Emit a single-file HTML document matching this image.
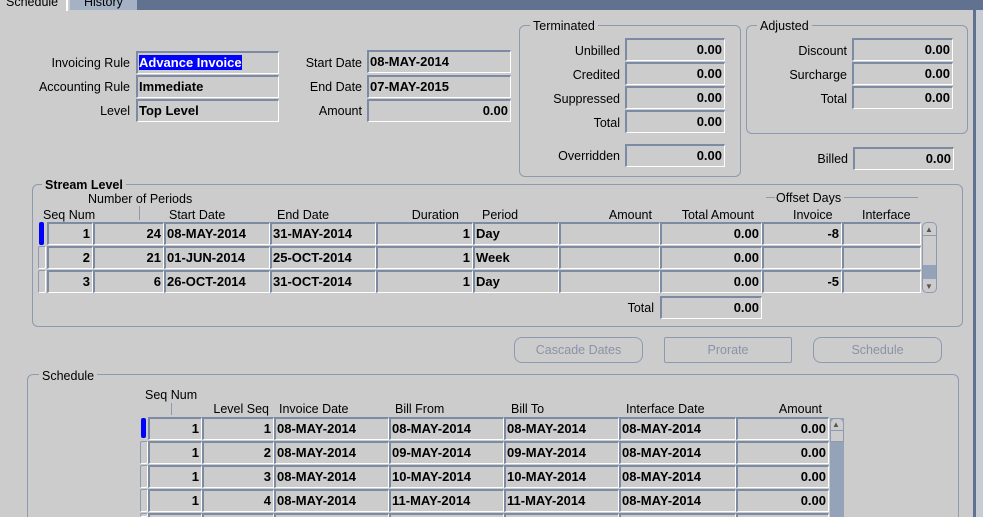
<!DOCTYPE html>
<html style="overflow:hidden;width:983px;height:517px"><head><style>
html,body{overflow:hidden}
body{margin:0;width:983px;height:517px;background:#cccccc;position:relative;overflow:hidden;font-family:"Liberation Sans",sans-serif}
div{position:absolute;box-sizing:border-box}
.f{height:23px;border:1px solid #fff;border-top:2px solid #7d8aa3;border-left:2px solid #7d8aa3;font:bold 13px "Liberation Sans",sans-serif;line-height:19px;padding:0 2px 0 1px;white-space:nowrap;overflow:hidden;color:#000}
.r{text-align:right}
.l{font-size:12.5px;line-height:14px;white-space:nowrap;color:#000}
.lr{text-align:right}
.box{border:1px solid #8e9ab0;border-radius:6px}
.t{background:#cccccc;padding:0 3px;font-size:12.5px;line-height:14px}
.btn{height:26px;border:1px solid #8e9ab0;border-radius:8px;text-align:center;font-size:12.5px;line-height:24px;color:#8a93a6}
.ind{width:8px;height:23px;border:1px solid #fff;border-left:1px solid #8e9ab0;border-top:1px solid #8e9ab0;border-radius:2px}
.sb{background:#95a3b8}
</style></head><body>
<div style="left:137px;top:0;width:846px;height:10px;background:#617290"></div>
<div style="left:0;top:0;width:68px;height:11px;border-right:2px solid #fff"><div class="l" style="left:6px;top:-5px">Schedule</div></div>
<div style="left:70px;top:0;width:67px;height:10px;background:#a5b1c4"><div class="l" style="left:14px;top:-5px">History</div></div>
<div style="left:973px;top:10px;width:3px;height:507px;background:#617290"></div>
<div style="left:976px;top:10px;width:7px;height:507px;background:#c8ccd4"></div>

<div class="l lr" style="left:20px;top:56px;width:110px">Invoicing Rule</div>
<div class="l lr" style="left:20px;top:80px;width:110px">Accounting Rule</div>
<div class="l lr" style="left:20px;top:104px;width:110px">Level</div>
<div class="f" style="left:136px;top:51px;width:143px"><span style="background:#0000ff;color:#fff">Advance Invoice</span></div>
<div class="f" style="left:136px;top:75px;width:143px">Immediate</div>
<div class="f" style="left:136px;top:99px;width:143px">Top Level</div>
<div class="l lr" style="left:280px;top:56px;width:82px">Start Date</div>
<div class="l lr" style="left:280px;top:80px;width:82px">End Date</div>
<div class="l lr" style="left:280px;top:104px;width:82px">Amount</div>
<div class="f" style="left:367px;top:50px;width:144px">08-MAY-2014</div>
<div class="f" style="left:367px;top:75px;width:144px">07-MAY-2015</div>
<div class="f r" style="left:367px;top:99px;width:144px">0.00</div>

<div class="box" style="left:519px;top:25px;width:222px;height:152px"></div>
<div class="t" style="left:530px;top:19px">Terminated</div>
<div class="l lr" style="left:520px;top:44px;width:100px">Unbilled</div>
<div class="l lr" style="left:520px;top:68px;width:100px">Credited</div>
<div class="l lr" style="left:520px;top:92px;width:100px">Suppressed</div>
<div class="l lr" style="left:520px;top:116px;width:100px">Total</div>
<div class="l lr" style="left:520px;top:149px;width:100px">Overridden</div>
<div class="f r" style="left:625px;top:38px;width:100px">0.00</div>
<div class="f r" style="left:625px;top:62px;width:100px">0.00</div>
<div class="f r" style="left:625px;top:86px;width:100px">0.00</div>
<div class="f r" style="left:625px;top:110px;width:100px">0.00</div>
<div class="f r" style="left:625px;top:144px;width:100px">0.00</div>

<div class="box" style="left:746px;top:25px;width:222px;height:109px"></div>
<div class="t" style="left:757px;top:19px">Adjusted</div>
<div class="l lr" style="left:747px;top:44px;width:100px">Discount</div>
<div class="l lr" style="left:747px;top:68px;width:100px">Surcharge</div>
<div class="l lr" style="left:747px;top:92px;width:100px">Total</div>
<div class="f r" style="left:852px;top:38px;width:101px">0.00</div>
<div class="f r" style="left:852px;top:62px;width:101px">0.00</div>
<div class="f r" style="left:852px;top:86px;width:101px">0.00</div>
<div class="l lr" style="left:747px;top:152px;width:101px">Billed</div>
<div class="f r" style="left:853px;top:147px;width:101px">0.00</div>

<div class="box" style="left:32px;top:184px;width:931px;height:143px"></div>
<div class="t" style="left:42px;top:178px;font-weight:bold">Stream Level</div>
<div class="l" style="left:88px;top:192px">Number of Periods</div>
<div class="l" style="left:43px;top:208px">Seq Num</div>
<div style="left:139px;top:206px;width:1px;height:14px;background:#8e9ab0"></div>
<div class="l" style="left:169px;top:208px">Start Date</div>
<div class="l" style="left:277px;top:208px">End Date</div>
<div class="l lr" style="left:376px;top:208px;width:83px">Duration</div>
<div class="l" style="left:482px;top:208px">Period</div>
<div class="l lr" style="left:559px;top:208px;width:93px">Amount</div>
<div class="l lr" style="left:660px;top:208px;width:94px">Total Amount</div>
<div class="l" style="left:793px;top:208px">Invoice</div>
<div class="l" style="left:862px;top:208px">Interface</div>
<div style="left:766px;top:197px;width:9px;height:1px;background:#8e9ab0"></div>
<div class="l" style="left:776px;top:191px">Offset Days</div>
<div style="left:844px;top:197px;width:74px;height:1px;background:#8e9ab0"></div>

<div class="ind" style="top:222px;background:#0000ff;border-color:#0000ff;width:5px;left:39px"></div>
<div class="ind" style="left:38px;top:246px"></div>
<div class="ind" style="left:38px;top:270px"></div>

<div class="f r" style="left:47px;top:222px;width:46px">1</div>
<div class="f r" style="left:93px;top:222px;width:71px">24</div>
<div class="f" style="left:164px;top:222px;width:106px">08-MAY-2014</div>
<div class="f" style="left:270px;top:222px;width:106px">31-MAY-2014</div>
<div class="f r" style="left:376px;top:222px;width:97px">1</div>
<div class="f" style="left:473px;top:222px;width:86px">Day</div>
<div class="f" style="left:559px;top:222px;width:101px"></div>
<div class="f r" style="left:660px;top:222px;width:102px">0.00</div>
<div class="f r" style="left:762px;top:222px;width:80px">-8</div>
<div class="f" style="left:842px;top:222px;width:79px"></div>

<div class="f r" style="left:47px;top:246px;width:46px">2</div>
<div class="f r" style="left:93px;top:246px;width:71px">21</div>
<div class="f" style="left:164px;top:246px;width:106px">01-JUN-2014</div>
<div class="f" style="left:270px;top:246px;width:106px">25-OCT-2014</div>
<div class="f r" style="left:376px;top:246px;width:97px">1</div>
<div class="f" style="left:473px;top:246px;width:86px">Week</div>
<div class="f" style="left:559px;top:246px;width:101px"></div>
<div class="f r" style="left:660px;top:246px;width:102px">0.00</div>
<div class="f r" style="left:762px;top:246px;width:80px"></div>
<div class="f" style="left:842px;top:246px;width:79px"></div>

<div class="f r" style="left:47px;top:270px;width:46px">3</div>
<div class="f r" style="left:93px;top:270px;width:71px">6</div>
<div class="f" style="left:164px;top:270px;width:106px">26-OCT-2014</div>
<div class="f" style="left:270px;top:270px;width:106px">31-OCT-2014</div>
<div class="f r" style="left:376px;top:270px;width:97px">1</div>
<div class="f" style="left:473px;top:270px;width:86px">Day</div>
<div class="f" style="left:559px;top:270px;width:101px"></div>
<div class="f r" style="left:660px;top:270px;width:102px">0.00</div>
<div class="f r" style="left:762px;top:270px;width:80px">-5</div>
<div class="f" style="left:842px;top:270px;width:79px"></div>

<div style="left:922px;top:222px;width:15px;height:71px;border:1px solid #8e9ab0;border-radius:5px;background:#cccccc"></div>
<div style="left:923px;top:235px;width:13px;height:30px;border-top:1px solid #8e9ab0"></div>
<div class="sb" style="left:923px;top:265px;width:13px;height:14px"></div>
<div class="l" style="left:925px;top:223px;font-size:8px;color:#555">▲</div>
<div class="l" style="left:925px;top:280px;font-size:8px;color:#555">▼</div>

<div class="l lr" style="left:600px;top:301px;width:54px">Total</div>
<div class="f r" style="left:660px;top:296px;width:102px">0.00</div>

<div class="btn" style="left:514px;top:337px;width:129px">Cascade Dates</div>
<div class="btn" style="left:664px;top:337px;width:128px;border-radius:2px">Prorate</div>
<div class="btn" style="left:813px;top:337px;width:129px">Schedule</div>

<div class="box" style="left:27px;top:374px;width:932px;height:143px;border-bottom:none;border-radius:6px 6px 0 0"></div>
<div class="t" style="left:39px;top:369px">Schedule</div>
<div class="l" style="left:145px;top:388px">Seq Num</div>
<div style="left:171px;top:403px;width:1px;height:12px;background:#8e9ab0"></div>
<div class="l lr" style="left:202px;top:402px;width:67px">Level Seq</div>
<div class="l" style="left:279px;top:402px">Invoice Date</div>
<div class="l" style="left:395px;top:402px">Bill From</div>
<div class="l" style="left:511px;top:402px">Bill To</div>
<div class="l" style="left:626px;top:402px">Interface Date</div>
<div class="l lr" style="left:736px;top:402px;width:86px">Amount</div>

<div class="ind" style="left:141px;top:418px;width:5px;background:#0000ff;border-color:#0000ff;height:20px"></div>
<div class="ind" style="left:140px;top:441px"></div>
<div class="ind" style="left:140px;top:465px"></div>
<div class="ind" style="left:140px;top:489px"></div>
<div class="ind" style="left:140px;top:513px;height:4px"></div>

<div class="f r" style="left:148px;top:417px;width:54px">1</div>
<div class="f r" style="left:202px;top:417px;width:72px">1</div>
<div class="f" style="left:274px;top:417px;width:115px">08-MAY-2014</div>
<div class="f" style="left:389px;top:417px;width:115px">08-MAY-2014</div>
<div class="f" style="left:504px;top:417px;width:115px">08-MAY-2014</div>
<div class="f" style="left:619px;top:417px;width:117px">08-MAY-2014</div>
<div class="f r" style="left:736px;top:417px;width:93px">0.00</div>

<div class="f r" style="left:148px;top:441px;width:54px">1</div>
<div class="f r" style="left:202px;top:441px;width:72px">2</div>
<div class="f" style="left:274px;top:441px;width:115px">08-MAY-2014</div>
<div class="f" style="left:389px;top:441px;width:115px">09-MAY-2014</div>
<div class="f" style="left:504px;top:441px;width:115px">09-MAY-2014</div>
<div class="f" style="left:619px;top:441px;width:117px">08-MAY-2014</div>
<div class="f r" style="left:736px;top:441px;width:93px">0.00</div>

<div class="f r" style="left:148px;top:465px;width:54px">1</div>
<div class="f r" style="left:202px;top:465px;width:72px">3</div>
<div class="f" style="left:274px;top:465px;width:115px">08-MAY-2014</div>
<div class="f" style="left:389px;top:465px;width:115px">10-MAY-2014</div>
<div class="f" style="left:504px;top:465px;width:115px">10-MAY-2014</div>
<div class="f" style="left:619px;top:465px;width:117px">08-MAY-2014</div>
<div class="f r" style="left:736px;top:465px;width:93px">0.00</div>

<div class="f r" style="left:148px;top:489px;width:54px">1</div>
<div class="f r" style="left:202px;top:489px;width:72px">4</div>
<div class="f" style="left:274px;top:489px;width:115px">08-MAY-2014</div>
<div class="f" style="left:389px;top:489px;width:115px">11-MAY-2014</div>
<div class="f" style="left:504px;top:489px;width:115px">11-MAY-2014</div>
<div class="f" style="left:619px;top:489px;width:117px">08-MAY-2014</div>
<div class="f r" style="left:736px;top:489px;width:93px">0.00</div>

<div class="f" style="left:148px;top:513px;width:54px;height:4px;border-bottom:none"></div>
<div class="f" style="left:202px;top:513px;width:72px;height:4px;border-bottom:none"></div>
<div class="f" style="left:274px;top:513px;width:115px;height:4px;border-bottom:none"></div>
<div class="f" style="left:389px;top:513px;width:115px;height:4px;border-bottom:none"></div>
<div class="f" style="left:504px;top:513px;width:115px;height:4px;border-bottom:none"></div>
<div class="f" style="left:619px;top:513px;width:117px;height:4px;border-bottom:none"></div>
<div class="f" style="left:736px;top:513px;width:93px;height:4px;border-bottom:none"></div>

<div class="sb" style="left:830px;top:418px;width:14px;height:99px"></div>
<div style="left:830px;top:418px;width:14px;height:24px;border:1px solid #8e9ab0;border-radius:5px 5px 0 0;background:#cccccc"></div>
<div style="left:831px;top:430px;width:12px;height:1px;background:#8e9ab0"></div>
<div class="l" style="left:832px;top:418px;font-size:8px;color:#555">▲</div>
</body></html>
